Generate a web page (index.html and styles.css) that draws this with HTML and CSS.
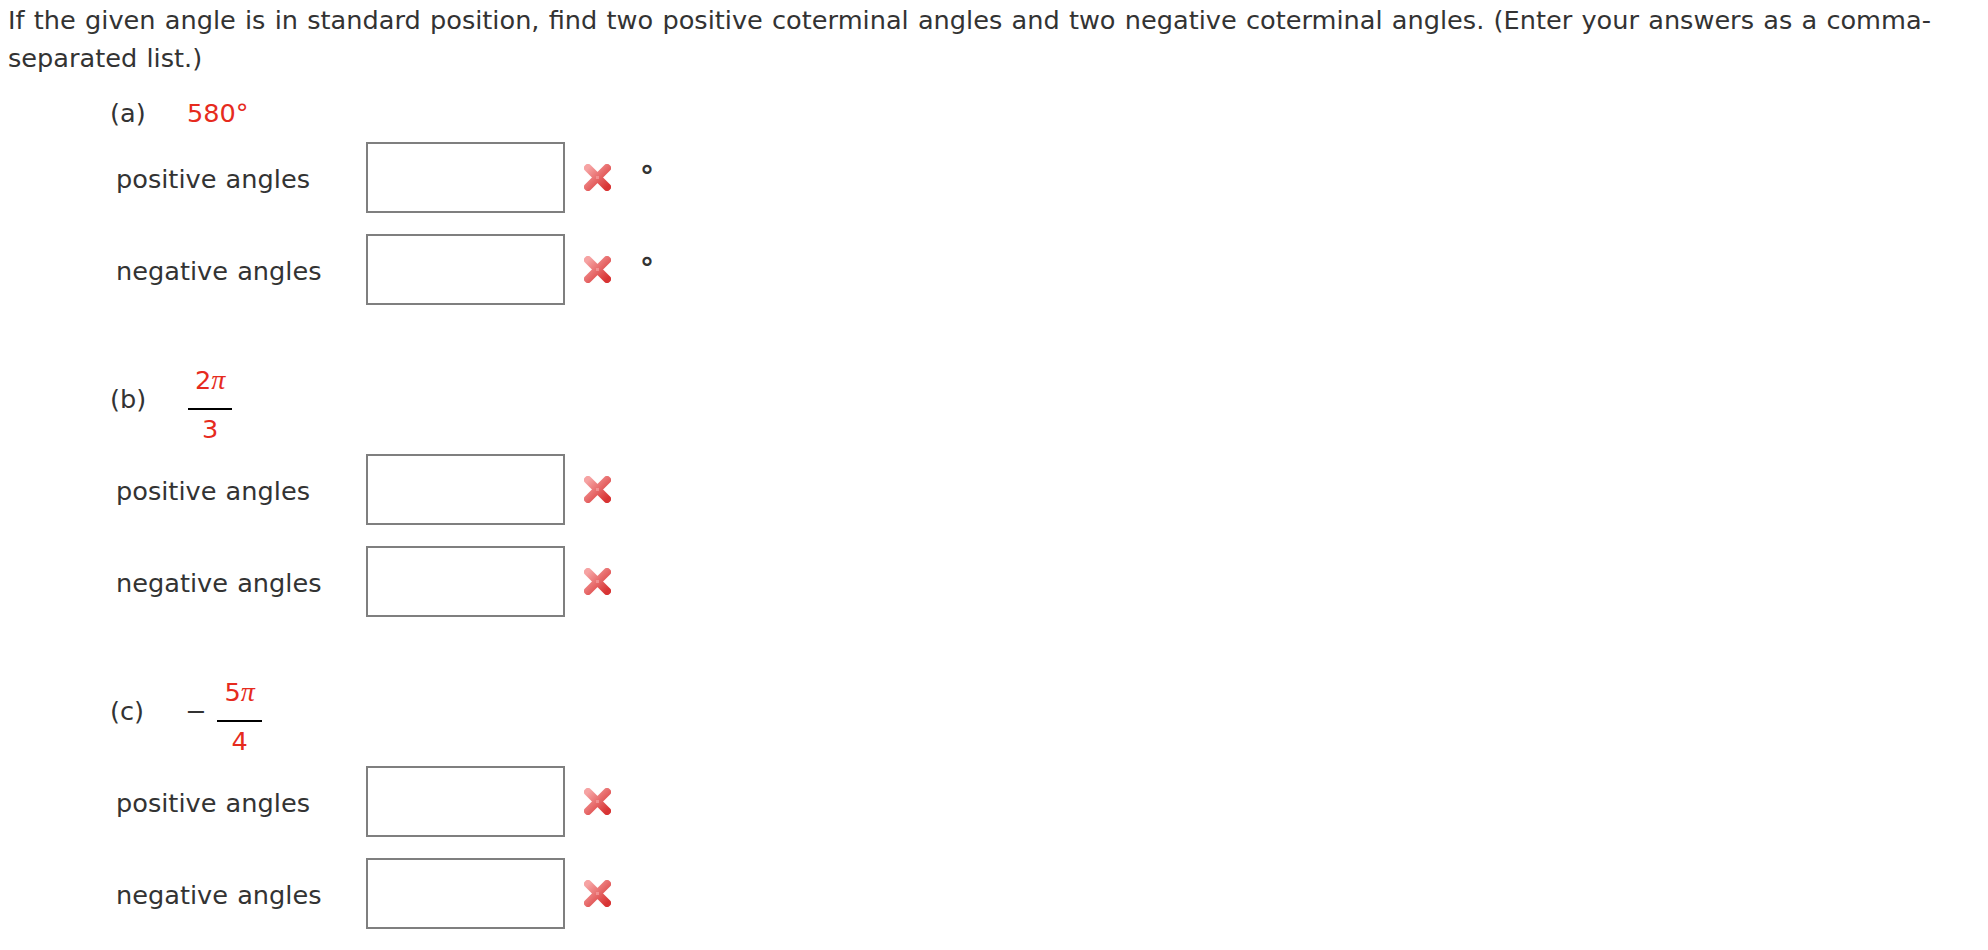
FILE: index.html
```html
<!DOCTYPE html>
<html lang="en">
<head>
<meta charset="utf-8">
<title>Coterminal angles</title>
<link rel="stylesheet" href="styles.css">
</head>
<body>
<div class="page">
  <p class="prompt">If the given angle is in standard position, find two positive coterminal angles and two negative coterminal angles. (Enter your answers as a comma-separated list.)</p>

  <div class="part part-a">
    <div class="part-head">
      <span class="part-label">(a)</span>
      <span class="given">580°</span>
    </div>
    <div class="answer-row">
      <span class="answer-label">positive angles</span>
      <input class="answer-box" type="text">
      <svg class="mark" viewBox="0 0 27 27" aria-hidden="true"><defs><linearGradient id="xg1" x1="0" y1="0" x2="1" y2="1"><stop offset="0" stop-color="#f6a3a3"/><stop offset="1" stop-color="#d83434"/></linearGradient></defs><path d="M4 4 L23 23 M23 4 L4 23" stroke="url(#xg1)" stroke-width="8" stroke-linecap="round" fill="none"/><rect x="12" y="12" width="3" height="3" fill="#f4a0a0" opacity="0.7"/></svg>
      <span class="unit">°</span>
    </div>
    <div class="answer-row">
      <span class="answer-label">negative angles</span>
      <input class="answer-box" type="text">
      <svg class="mark" viewBox="0 0 27 27" aria-hidden="true"><defs><linearGradient id="xg2" x1="0" y1="0" x2="1" y2="1"><stop offset="0" stop-color="#f6a3a3"/><stop offset="1" stop-color="#d83434"/></linearGradient></defs><path d="M4 4 L23 23 M23 4 L4 23" stroke="url(#xg2)" stroke-width="8" stroke-linecap="round" fill="none"/><rect x="12" y="12" width="3" height="3" fill="#f4a0a0" opacity="0.7"/></svg>
      <span class="unit">°</span>
    </div>
  </div>

  <div class="part part-b">
    <div class="part-head">
      <span class="part-label">(b)</span>
      <span class="frac">
        <span class="num">2<span class="pi">π</span></span>
        <span class="bar"></span>
        <span class="den">3</span>
      </span>
    </div>
    <div class="answer-row">
      <span class="answer-label">positive angles</span>
      <input class="answer-box" type="text">
      <svg class="mark" viewBox="0 0 27 27" aria-hidden="true"><defs><linearGradient id="xg3" x1="0" y1="0" x2="1" y2="1"><stop offset="0" stop-color="#f6a3a3"/><stop offset="1" stop-color="#d83434"/></linearGradient></defs><path d="M4 4 L23 23 M23 4 L4 23" stroke="url(#xg3)" stroke-width="8" stroke-linecap="round" fill="none"/><rect x="12" y="12" width="3" height="3" fill="#f4a0a0" opacity="0.7"/></svg>
    </div>
    <div class="answer-row">
      <span class="answer-label">negative angles</span>
      <input class="answer-box" type="text">
      <svg class="mark" viewBox="0 0 27 27" aria-hidden="true"><defs><linearGradient id="xg4" x1="0" y1="0" x2="1" y2="1"><stop offset="0" stop-color="#f6a3a3"/><stop offset="1" stop-color="#d83434"/></linearGradient></defs><path d="M4 4 L23 23 M23 4 L4 23" stroke="url(#xg4)" stroke-width="8" stroke-linecap="round" fill="none"/><rect x="12" y="12" width="3" height="3" fill="#f4a0a0" opacity="0.7"/></svg>
    </div>
  </div>

  <div class="part part-c">
    <div class="part-head">
      <span class="part-label">(c)</span>
      <span class="minus">−</span>
      <span class="frac">
        <span class="num">5<span class="pi">π</span></span>
        <span class="bar"></span>
        <span class="den">4</span>
      </span>
    </div>
    <div class="answer-row">
      <span class="answer-label">positive angles</span>
      <input class="answer-box" type="text">
      <svg class="mark" viewBox="0 0 27 27" aria-hidden="true"><defs><linearGradient id="xg5" x1="0" y1="0" x2="1" y2="1"><stop offset="0" stop-color="#f6a3a3"/><stop offset="1" stop-color="#d83434"/></linearGradient></defs><path d="M4 4 L23 23 M23 4 L4 23" stroke="url(#xg5)" stroke-width="8" stroke-linecap="round" fill="none"/><rect x="12" y="12" width="3" height="3" fill="#f4a0a0" opacity="0.7"/></svg>
    </div>
    <div class="answer-row">
      <span class="answer-label">negative angles</span>
      <input class="answer-box" type="text">
      <svg class="mark" viewBox="0 0 27 27" aria-hidden="true"><defs><linearGradient id="xg6" x1="0" y1="0" x2="1" y2="1"><stop offset="0" stop-color="#f6a3a3"/><stop offset="1" stop-color="#d83434"/></linearGradient></defs><path d="M4 4 L23 23 M23 4 L4 23" stroke="url(#xg6)" stroke-width="8" stroke-linecap="round" fill="none"/><rect x="12" y="12" width="3" height="3" fill="#f4a0a0" opacity="0.7"/></svg>
    </div>
  </div>
</div>
</body>
</html>
```

FILE: styles.css
```css
html, body {
  margin: 0;
  padding: 0;
  background: #ffffff;
}

body {
  color: #333333;
  font-family: "DejaVu Sans", Verdana, sans-serif;
  font-size: 25.6px;
  word-spacing: 1.1px;
}

.page {
  padding: 2px 8px 0 8px;
}

.prompt {
  margin: 0;
  line-height: 37.5px;
}

.part-head {
  display: flex;
  align-items: center;
  padding-left: 102px;
  line-height: 30px;
}

.part-a .part-head {
  margin-top: 21px;
}

.part-b .part-head,
.part-c .part-head {
  margin-top: 60px;
}

.part-label {
  width: 77px;
  flex: none;
}

.part-b .part-label,
.part-c .part-label {
  padding-bottom: 12px;
}

.given {
  color: #e62b1e;
}

.minus {
  padding-bottom: 12px;
  margin-left: -2px;
  margin-right: 10px;
}

.frac {
  display: flex;
  flex-direction: column;
  align-items: stretch;
  text-align: center;
  color: #e62b1e;
  margin-left: 1px;
}

.num {
  line-height: 30px;
  padding: 0 7px 13px 7px;
}

.pi {
  font-family: "Liberation Serif", "DejaVu Serif", serif;
  font-style: italic;
  font-size: 28px;
}

.bar {
  height: 2px;
  background: #000000;
}

.den {
  line-height: 30px;
  padding-top: 4px;
}

.answer-row {
  display: flex;
  align-items: center;
  height: 71px;
  margin-top: 21px;
  padding-left: 108px;
  line-height: 30px;
}

.part-a .part-head + .answer-row {
  margin-top: 14px;
}

.part-b .part-head + .answer-row,
.part-c .part-head + .answer-row {
  margin-top: 10px;
}

.answer-label {
  width: 250px;
  flex: none;
  padding-top: 2px;
}

.answer-box {
  width: 199px;
  height: 71px;
  box-sizing: border-box;
  border: 2px solid #7f7f7f;
  border-radius: 0;
  margin: 0;
  padding: 0 8px;
  font: inherit;
  background: #ffffff;
  outline: none;
  flex: none;
}

.mark {
  width: 27px;
  height: 27px;
  margin-left: 19px;
  flex: none;
}

.unit {
  margin-left: 29px;
  margin-top: -2px;
  font-weight: bold;
  font-size: 28px;
}
```
